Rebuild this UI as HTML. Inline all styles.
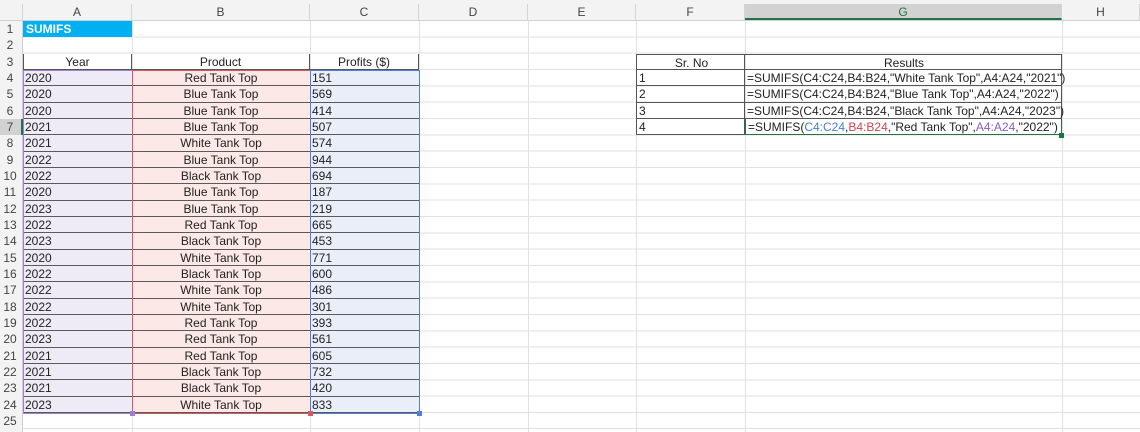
<!DOCTYPE html>
<html><head><meta charset="utf-8"><style>
body{margin:0;width:1140px;height:432px;overflow:hidden;background:#fff;font-family:"Liberation Sans",Arial,sans-serif;font-size:12px;color:#222;position:relative}
.hdr{position:absolute;left:0;top:0;width:1140px;height:21px;background:#f3f3f3;border-bottom:1px solid #d0d0d0;box-sizing:border-box}
.hdr div{position:absolute;top:4px;height:16px;line-height:16px;text-align:center;color:#444;border-right:1px solid #d4d4d4;box-sizing:border-box}
.rn{position:absolute;left:0;top:21px;width:23px;height:411px;background:#f3f3f3;border-right:1px solid #d0d0d0;box-sizing:border-box}
.grid{position:absolute;left:23px;top:21px;width:1117px;height:411px;background:repeating-linear-gradient(to bottom,transparent 0,transparent 15.33px,#e1e1e1 15.33px,#e1e1e1 16.33px)}
.vl{position:absolute;top:21px;width:1px;height:411px;background:#e1e1e1}
.g{position:absolute;left:0;top:21px;display:grid;grid-template-columns:23px 109px 178px 109px 109px 108px 109px 317px 78px;grid-template-rows:repeat(25,16.33px)}
.g>div{box-sizing:border-box;line-height:16px;white-space:nowrap;overflow:visible}
.n{text-align:center;color:#444;font-size:12px;padding-right:3px}
.a{background:#efebf6;border-bottom:1px solid #5a5a5a;padding-left:2px}
.b{background:#fbe8e7;border-bottom:1px solid #5a5a5a;text-align:center}
.c{background:#e9eef8;border-bottom:1px solid #5a5a5a;padding-left:2px}
.h{border-bottom:1px solid #555;border-right:1px solid #555;text-align:center}
.f{border:1px solid #555;border-top:none;padding-left:2px}
.ff{border:1px solid #555;border-top:none;border-left:none;padding-left:2px}
</style></head><body>
<div class="hdr">
<div style="left:0;width:23px;background:#f3f3f3"></div>
<div style="left:23px;width:109px">A</div>
<div style="left:132px;width:178px">B</div>
<div style="left:310px;width:109px">C</div>
<div style="left:419px;width:109px">D</div>
<div style="left:528px;width:108px">E</div>
<div style="left:636px;width:109px">F</div>
<div style="left:745px;width:317px;background:#d2d2d2;border-bottom:2px solid #217346;color:#217346">G</div>
<div style="left:1062px;width:78px">H</div>
</div>
<div class="grid"></div>
<div class="vl" style="left:132px"></div><div class="vl" style="left:310px"></div><div class="vl" style="left:419px"></div><div class="vl" style="left:528px"></div><div class="vl" style="left:636px"></div><div class="vl" style="left:745px"></div><div class="vl" style="left:1062px"></div>
<div class="rn"></div>
<div style="position:absolute;left:0;top:119px;width:23px;height:16px;background:#d2d2d2;border-right:2px solid #217346;box-sizing:border-box"></div>
<div class="g">
<div class="n" style="grid-row:1;grid-column:1">1</div>
<div style="grid-row:1;grid-column:2;background:#00b0f0;color:#fff;font-weight:bold;padding-left:3px">SUMIFS</div>
<div class="n" style="grid-row:2;grid-column:1">2</div>
<div class="n" style="grid-row:3;grid-column:1">3</div>
<div class="h" style="grid-row:3;grid-column:2;border-left:1px solid #555">Year</div>
<div class="h" style="grid-row:3;grid-column:3">Product</div>
<div class="h" style="grid-row:3;grid-column:4">Profits ($)</div>
<div class="f" style="grid-row:3;grid-column:7;text-align:center;border-top:1px solid #555">Sr. No</div>
<div class="ff" style="grid-row:3;grid-column:8;text-align:center;border-top:1px solid #555">Results</div>
<div class="f" style="grid-row:4;grid-column:7">1</div><div class="ff" style="grid-row:4;grid-column:8">=SUMIFS(C4:C24,B4:B24,"White Tank Top",A4:A24,"2021")</div>
<div class="f" style="grid-row:5;grid-column:7">2</div><div class="ff" style="grid-row:5;grid-column:8">=SUMIFS(C4:C24,B4:B24,"Blue Tank Top",A4:A24,"2022")</div>
<div class="f" style="grid-row:6;grid-column:7">3</div><div class="ff" style="grid-row:6;grid-column:8">=SUMIFS(C4:C24,B4:B24,"Black Tank Top",A4:A24,"2023")</div>
<div class="f" style="grid-row:7;grid-column:7">4</div><div class="ff" style="grid-row:7;grid-column:8;border:1px solid #217346;border-top:none">=SUMIFS(<span style="color:#3f7fd8">C4:C24</span>,<span style="color:#d0444c">B4:B24</span>,"Red Tank Top",<span style="color:#8a5cc4">A4:A24</span>,"2022")</div>

<div class="n" style="grid-row:4;grid-column:1">4</div><div class="a" style="grid-row:4;grid-column:2">2020</div><div class="b" style="grid-row:4;grid-column:3">Red Tank Top</div><div class="c" style="grid-row:4;grid-column:4">151</div>
<div class="n" style="grid-row:5;grid-column:1">5</div><div class="a" style="grid-row:5;grid-column:2">2020</div><div class="b" style="grid-row:5;grid-column:3">Blue Tank Top</div><div class="c" style="grid-row:5;grid-column:4">569</div>
<div class="n" style="grid-row:6;grid-column:1">6</div><div class="a" style="grid-row:6;grid-column:2">2020</div><div class="b" style="grid-row:6;grid-column:3">Blue Tank Top</div><div class="c" style="grid-row:6;grid-column:4">414</div>
<div class="n" style="grid-row:7;grid-column:1">7</div><div class="a" style="grid-row:7;grid-column:2">2021</div><div class="b" style="grid-row:7;grid-column:3">Blue Tank Top</div><div class="c" style="grid-row:7;grid-column:4">507</div>
<div class="n" style="grid-row:8;grid-column:1">8</div><div class="a" style="grid-row:8;grid-column:2">2021</div><div class="b" style="grid-row:8;grid-column:3">White Tank Top</div><div class="c" style="grid-row:8;grid-column:4">574</div>
<div class="n" style="grid-row:9;grid-column:1">9</div><div class="a" style="grid-row:9;grid-column:2">2022</div><div class="b" style="grid-row:9;grid-column:3">Blue Tank Top</div><div class="c" style="grid-row:9;grid-column:4">944</div>
<div class="n" style="grid-row:10;grid-column:1">10</div><div class="a" style="grid-row:10;grid-column:2">2022</div><div class="b" style="grid-row:10;grid-column:3">Black Tank Top</div><div class="c" style="grid-row:10;grid-column:4">694</div>
<div class="n" style="grid-row:11;grid-column:1">11</div><div class="a" style="grid-row:11;grid-column:2">2020</div><div class="b" style="grid-row:11;grid-column:3">Blue Tank Top</div><div class="c" style="grid-row:11;grid-column:4">187</div>
<div class="n" style="grid-row:12;grid-column:1">12</div><div class="a" style="grid-row:12;grid-column:2">2023</div><div class="b" style="grid-row:12;grid-column:3">Blue Tank Top</div><div class="c" style="grid-row:12;grid-column:4">219</div>
<div class="n" style="grid-row:13;grid-column:1">13</div><div class="a" style="grid-row:13;grid-column:2">2022</div><div class="b" style="grid-row:13;grid-column:3">Red Tank Top</div><div class="c" style="grid-row:13;grid-column:4">665</div>
<div class="n" style="grid-row:14;grid-column:1">14</div><div class="a" style="grid-row:14;grid-column:2">2023</div><div class="b" style="grid-row:14;grid-column:3">Black Tank Top</div><div class="c" style="grid-row:14;grid-column:4">453</div>
<div class="n" style="grid-row:15;grid-column:1">15</div><div class="a" style="grid-row:15;grid-column:2">2020</div><div class="b" style="grid-row:15;grid-column:3">White Tank Top</div><div class="c" style="grid-row:15;grid-column:4">771</div>
<div class="n" style="grid-row:16;grid-column:1">16</div><div class="a" style="grid-row:16;grid-column:2">2022</div><div class="b" style="grid-row:16;grid-column:3">Black Tank Top</div><div class="c" style="grid-row:16;grid-column:4">600</div>
<div class="n" style="grid-row:17;grid-column:1">17</div><div class="a" style="grid-row:17;grid-column:2">2022</div><div class="b" style="grid-row:17;grid-column:3">White Tank Top</div><div class="c" style="grid-row:17;grid-column:4">486</div>
<div class="n" style="grid-row:18;grid-column:1">18</div><div class="a" style="grid-row:18;grid-column:2">2022</div><div class="b" style="grid-row:18;grid-column:3">White Tank Top</div><div class="c" style="grid-row:18;grid-column:4">301</div>
<div class="n" style="grid-row:19;grid-column:1">19</div><div class="a" style="grid-row:19;grid-column:2">2022</div><div class="b" style="grid-row:19;grid-column:3">Red Tank Top</div><div class="c" style="grid-row:19;grid-column:4">393</div>
<div class="n" style="grid-row:20;grid-column:1">20</div><div class="a" style="grid-row:20;grid-column:2">2023</div><div class="b" style="grid-row:20;grid-column:3">Red Tank Top</div><div class="c" style="grid-row:20;grid-column:4">561</div>
<div class="n" style="grid-row:21;grid-column:1">21</div><div class="a" style="grid-row:21;grid-column:2">2021</div><div class="b" style="grid-row:21;grid-column:3">Red Tank Top</div><div class="c" style="grid-row:21;grid-column:4">605</div>
<div class="n" style="grid-row:22;grid-column:1">22</div><div class="a" style="grid-row:22;grid-column:2">2021</div><div class="b" style="grid-row:22;grid-column:3">Black Tank Top</div><div class="c" style="grid-row:22;grid-column:4">732</div>
<div class="n" style="grid-row:23;grid-column:1">23</div><div class="a" style="grid-row:23;grid-column:2">2021</div><div class="b" style="grid-row:23;grid-column:3">Black Tank Top</div><div class="c" style="grid-row:23;grid-column:4">420</div>
<div class="n" style="grid-row:24;grid-column:1">24</div><div class="a" style="grid-row:24;grid-column:2">2023</div><div class="b" style="grid-row:24;grid-column:3">White Tank Top</div><div class="c" style="grid-row:24;grid-column:4">833</div>
<div class="n" style="grid-row:25;grid-column:1">25</div>
</div>
<div style="position:absolute;left:23px;top:70px;width:110px;height:344px;border:1px solid #a17fcf;box-sizing:border-box"></div>
<div style="position:absolute;left:132px;top:70px;width:179px;height:344px;border:1px solid #d9585f;box-sizing:border-box"></div>
<div style="position:absolute;left:310px;top:70px;width:110px;height:344px;border:1px solid #4f80d8;box-sizing:border-box"></div>
<div style="position:absolute;left:130px;top:411px;width:5px;height:5px;background:#a17fcf"></div>
<div style="position:absolute;left:308px;top:411px;width:5px;height:5px;background:#d9585f"></div>
<div style="position:absolute;left:417px;top:411px;width:5px;height:5px;background:#4f80d8"></div>
<div style="position:absolute;left:1059px;top:133px;width:5px;height:5px;background:#217346"></div>
</body></html>
